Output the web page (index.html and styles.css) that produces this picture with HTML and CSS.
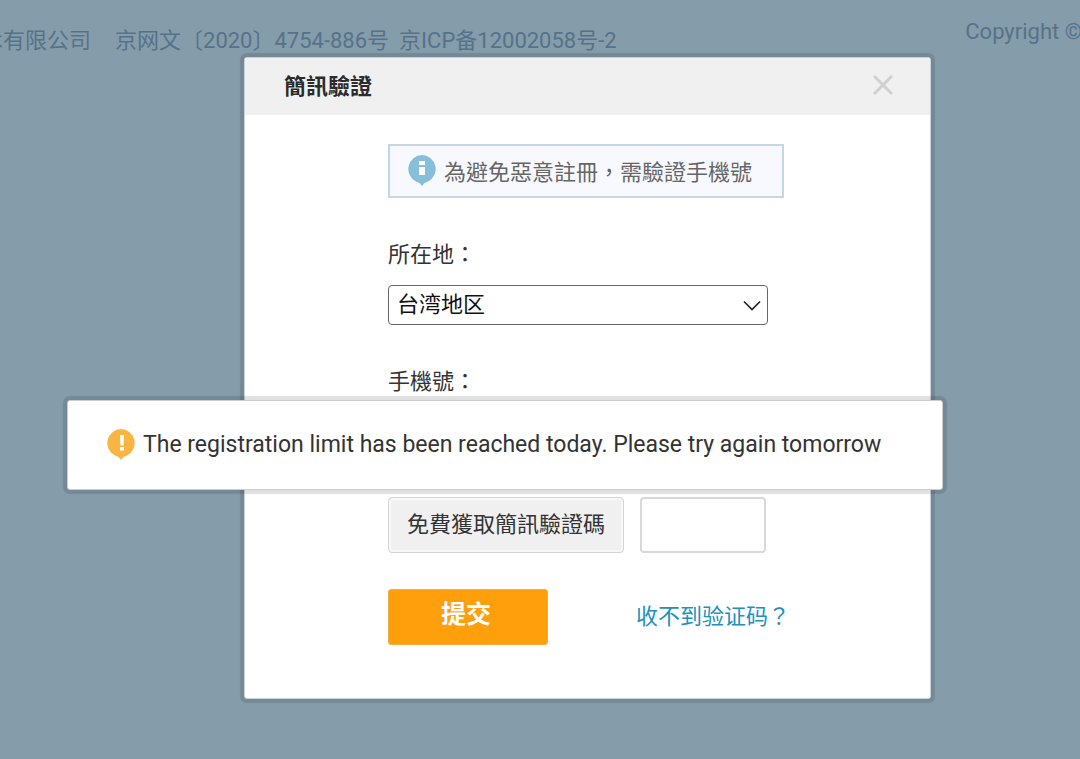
FILE: index.html
```html
<!DOCTYPE html>
<html lang="zh-Hant">
<head>
<meta charset="utf-8">
<meta name="viewport" content="width=device-width, initial-scale=1">
<title>簡訊驗證</title>
<link rel="stylesheet" href="styles.css">
</head>
<body>
<footer class="site-info">
  <div class="company" lang="zh-Hans"><span>术有限公司</span><span class="license"><span>京网文〔2020〕4754-886号</span> <span>京ICP备12002058号-2</span></span></div>
  <div class="copyright">Copyright ©</div>
</footer>

<section class="dialog" role="dialog" aria-labelledby="dialog-title">
  <header class="dialog-head">
    <h1 id="dialog-title">簡訊驗證</h1>
    <button class="close" type="button" aria-label="關閉">
      <svg width="20" height="20" viewBox="0 0 20 20"><path d="M1 1L19 19M19 1L1 19" stroke="#d0d0d0" stroke-width="3" fill="none"/></svg>
    </button>
  </header>
  <form class="dialog-body">
    <div class="notice">
      <svg width="28" height="32" viewBox="0 0 28 32"><path d="M14 0a14 14 0 0 1 6 26.500l-3.500 1.500-2.500 3-2.500-3-3.500-1.500a14 14 0 0 1 6-26.500z" fill="#87bfdb"/><path d="M11 6h6v4h-6zM11 12h6v8h-6z" fill="#fff"/></svg>
      <p>為避免惡意註冊，需驗證手機號</p>
    </div>
    <label class="field-label" for="region">所在地：</label>
    <div class="select-wrap">
      <select id="region" lang="zh-Hans"><option>台湾地区</option></select>
      <svg class="chevron" width="18" height="11" viewBox="0 0 18 11"><path d="M1 1.500L9 9.500L17 1.500" stroke="#222" stroke-width="1.700" fill="none"/></svg>
    </div>
    <label class="field-label" for="phone">手機號：</label>
    <input class="text-box phone" id="phone" type="tel">
    <div class="code-row">
      <button class="get-code" type="button">免費獲取簡訊驗證碼</button>
      <input class="text-box code" type="text" aria-label="驗證碼">
    </div>
    <div class="submit-row">
      <button class="submit" type="button">提交</button>
      <a class="help" href="#">收不到验证码？</a>
    </div>
  </form>
</section>

<div class="alert" role="alert">
  <svg width="28" height="32" viewBox="0 0 28 32"><path d="M14 0a14 14 0 0 1 6 26.500l-3.500 1.500-2.500 3-2.500-3-3.500-1.500a14 14 0 0 1 6-26.500z" fill="#f9b544"/><path d="M13 6h4l-.5 10.500h-3zM13 18h4v3.500h-4z" fill="#fff"/></svg>
  <p>The registration limit has been reached today. Please try again tomorrow</p>
</div>
</body>
</html>
```
FILE: styles.css
```css
* {
  box-sizing: border-box;
}

body {
  margin: 0;
  min-height: 100vh;
  position: relative;
  overflow: hidden;
  background: #859cab;
  color: #333;
  font: 22px/32px Roboto, "Noto Sans CJK TC", sans-serif;
}

:lang(zh-Hans) {
  font-family: Roboto, "Noto Sans CJK SC", sans-serif;
}

h1,
p {
  margin: 0;
}

svg {
  display: block;
  flex: none;
}

button,
input,
select {
  font: inherit;
  color: inherit;
}

.site-info {
  display: flex;
  justify-content: space-between;
  align-items: flex-start;
  margin: 0 -2px 0 -19px;
  padding-top: 16px;
  color: #577288;
  white-space: nowrap;
}

.company {
  display: flex;
  gap: 24px;
  padding-top: 9px;
}

.license {
  display: flex;
  gap: 10px;
}

.dialog {
  position: absolute;
  top: 57px;
  left: 244px;
  right: 149px;
  background: #fff;
  border: 1px solid #cbd2d7;
  border-radius: 3px;
  box-shadow: 0 0 1px 4px rgba(0, 0, 0, 0.12);
}

.dialog-head {
  display: flex;
  align-items: center;
  justify-content: space-between;
  height: 57px;
  padding: 0 37px 0 39px;
  background: #f0f0f0;
}

.dialog-head h1 {
  font-size: 22px;
  font-weight: 700;
  color: #2b2b2b;
}

.close {
  padding: 0 0 3px;
  border: 0;
  background: none;
}

.dialog-body {
  padding: 29px 146px 53px 143px;
}

.notice {
  display: flex;
  align-items: center;
  gap: 8px;
  height: 54px;
  padding: 0 18px;
  border: 2px solid #c6d6e3;
  background: #f7f9fe;
  color: #666;
  white-space: nowrap;
}

.notice p {
  padding-top: 3px;
}

.field-label {
  display: block;
  margin-top: 41px;
}

.select-wrap {
  position: relative;
  margin: 14px 16px 0 0;
}

.select-wrap select {
  display: block;
  width: 100%;
  height: 40px;
  padding: 0 8px;
  appearance: none;
  border: 1px solid #666;
  border-radius: 4px;
  background: #fff;
  color: #111;
}

.chevron {
  position: absolute;
  right: 7px;
  top: 15px;
  pointer-events: none;
}

.text-box {
  display: block;
  border: 2px solid #d8d8d8;
  border-radius: 4px;
  background: #fff;
}

.phone {
  width: 100%;
  height: 56px;
  margin-top: 16px;
}

.code-row {
  display: flex;
  gap: 16px;
  margin: 27px 18px 0 0;
}

.get-code {
  flex: none;
  height: 56px;
  padding: 0 18px;
  border: 1px solid #d4d4d4;
  border-radius: 4px;
  background: #f0f0f0;
  box-shadow: inset 0 0 0 2px #f8f8f8;
}

.code {
  flex: 1;
  min-width: 0;
  height: 56px;
}

.submit-row {
  display: flex;
  align-items: center;
  gap: 88px;
  margin-top: 36px;
}

.submit {
  flex: none;
  width: 160px;
  height: 56px;
  padding: 0 4px 4px 0;
  border: 1px solid #f5ae3d;
  border-radius: 3px;
  background: #ff9f0c;
  color: #fff;
  font-size: 25px;
  font-weight: 700;
}

.help {
  color: #2190bd;
  text-decoration: none;
  white-space: nowrap;
}

.alert {
  position: absolute;
  top: 400px;
  left: 67px;
  right: 137px;
  display: flex;
  align-items: center;
  gap: 8px;
  height: 90px;
  padding: 0 39px;
  background: #fff;
  border: 1px solid #ccc;
  border-radius: 3px;
  box-shadow: 0 0 1px 4px rgba(0, 0, 0, 0.12);
  font-size: 23px;
  white-space: nowrap;
}
```
